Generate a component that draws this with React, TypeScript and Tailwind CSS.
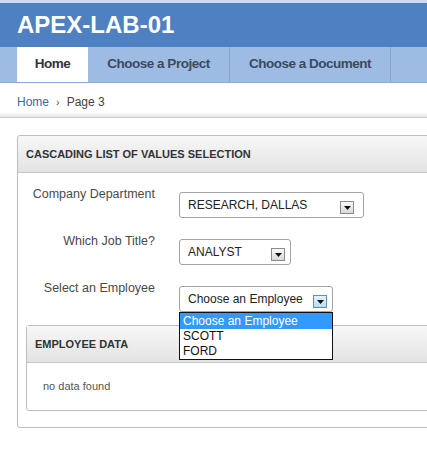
import React from 'react';

const font = { fontFamily: '"Liberation Sans", Arial, sans-serif' };

interface SelectBoxProps {
  value: string;
  width: string;
  arrowRight: string;
  focused?: boolean;
}

const SelectBox: React.FC<SelectBoxProps> = ({ value, width, arrowRight, focused }) => (
  <div
    className={`relative mt-[5px] h-[26px] ${width} flex items-center border border-[#a3a3a3] rounded-[3px] bg-white pl-[8px] text-[12px] text-[#222]`}
  >
    <span>{value}</span>
    <div
      className={`absolute bottom-[3px] ${arrowRight} w-[14px] h-[13px] flex items-center justify-center border ${
        focused
          ? 'border-[#5b8fc7] bg-gradient-to-b from-[#e6f3fc] to-[#b9dbf3]'
          : 'border-[#8a8a8a] bg-gradient-to-b from-[#fafafa] to-[#d9d9d9]'
      }`}
    >
      <svg width="7" height="4" viewBox="0 0 7 4">
        <path d="M0 0 L7 0 L3.5 4 Z" fill="#111" />
      </svg>
    </div>
  </div>
);

export default function App() {
  return (
    <div className="w-[427px] h-[468px] bg-white overflow-hidden" style={font}>
      {/* header */}
      <div className="h-[3px] bg-[#cddcef]" />
      <div className="h-[44px] bg-[#4f80c1] flex items-center pl-[17px]">
        <span className="text-[24px] font-bold text-white">APEX-LAB-01</span>
      </div>

      {/* tabs */}
      <div className="h-[36px] bg-[#9ebce3] border-b border-[#8cabd6] flex pl-[17px] text-[13.5px] font-bold tracking-[-0.5px]">
        <div className="bg-white w-[71px] flex items-center justify-center text-[#333]">Home</div>
        <div className="w-[142px] flex items-center justify-center text-[#3b4a5f] border-r border-[#85a5d2]">
          Choose a Project
        </div>
        <div className="w-[161px] flex items-center justify-center text-[#3b4a5f] border-r border-[#85a5d2]">
          Choose a Document
        </div>
      </div>

      {/* breadcrumb */}
      <div className="pt-[12px] pl-[17px] text-[12px] leading-[14px] flex items-center gap-[7px]">
        <span className="text-[#3f67a0]">Home</span>
        <span className="text-[#555] text-[11px]">›</span>
        <span className="text-[#444]">Page 3</span>
      </div>
      <div className="mt-[3px] h-[6px] bg-gradient-to-b from-white to-[#e6e6e6] border-b border-[#cfcfcf]" />

      {/* region */}
      <div className="mt-[17px] ml-[17px] w-[440px] border border-[#bdbdbd] rounded-[3px]">
        <div className="h-[37px] flex items-center pl-[8px] bg-gradient-to-b from-[#f7f7f7] to-[#e3e3e3] border-b border-[#c8c8c8] rounded-t-[3px]">
          <span className="text-[11px] font-bold text-[#333]">CASCADING LIST OF VALUES SELECTION</span>
        </div>

        <div className="pt-[14px] pb-[16px]">
          <div className="flex flex-col gap-[16px]">
            <div className="flex gap-[24px]">
              <div className="w-[137px] text-right text-[12.5px] leading-[14px] text-[#4a4a4a]">Company Department</div>
              <SelectBox value="RESEARCH, DALLAS" width="w-[185px]" arrowRight="right-[9px]" />
            </div>
            <div className="flex gap-[24px]">
              <div className="w-[137px] text-right text-[12.5px] leading-[14px] text-[#4a4a4a]">Which Job Title?</div>
              <SelectBox value="ANALYST" width="w-[112px]" arrowRight="right-[5px]" />
            </div>
            <div className="flex gap-[24px]">
              <div className="w-[137px] text-right text-[12.5px] leading-[14px] text-[#4a4a4a]">Select an Employee</div>
              <div className="relative">
                <SelectBox value="Choose an Employee" width="w-[154px]" arrowRight="right-[5px]" focused />
                <div className="absolute z-10 left-0 top-[31px] w-[154px] border border-[#111] bg-white text-[12px] text-[#111]">
                  <div className="h-[16px] leading-[16px] pl-[3px] bg-[#3399ff] text-white">Choose an Employee</div>
                  <div className="h-[15px] leading-[15px] pl-[3px]">SCOTT</div>
                  <div className="h-[15px] leading-[15px] pl-[3px]">FORD</div>
                </div>
              </div>
            </div>
          </div>

          {/* sub region */}
          <div className="mt-[13px] ml-[8px] border border-[#bdbdbd] rounded-[3px]">
            <div className="h-[37px] flex items-center pl-[8px] bg-gradient-to-b from-[#f7f7f7] to-[#e3e3e3] border-b border-[#c8c8c8]">
              <span className="text-[11px] font-bold text-[#333]">EMPLOYEE DATA</span>
            </div>
            <div className="h-[47px] flex items-center pl-[16px] text-[11px] text-[#555]">no data found</div>
          </div>
        </div>
      </div>
    </div>
  );
}
